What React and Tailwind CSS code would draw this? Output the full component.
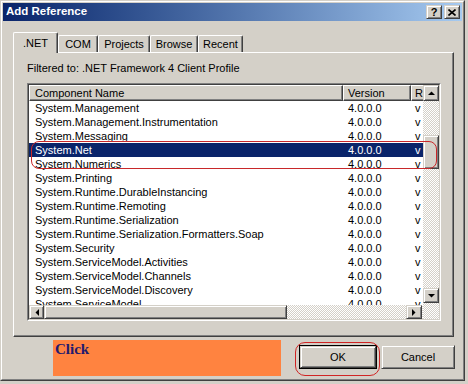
import React from "react";

const FONT = { fontFamily: '"Liberation Sans", Arial, sans-serif' };

const raised =
  "border border-t-[#d4d0c8] border-l-[#d4d0c8] border-r-[#404040] border-b-[#404040] shadow-[inset_1px_1px_0_#ffffff,inset_-1px_-1px_0_#808080] bg-[#d4d0c8]";

const dotted =
  "bg-[image:repeating-conic-gradient(#d4d0c8_0%_25%,#ffffff_0%_50%)] bg-[length:2px_2px]";

function Arrow({ dir }) {
  const pts = {
    up: "0,4 7,4 3.5,0.5",
    down: "0,0 7,0 3.5,3.5",
    left: "4,0 4,7 0.5,3.5",
    right: "0,0 0,7 3.5,3.5",
  }[dir];
  const horiz = dir === "left" || dir === "right";
  return (
    <svg width={horiz ? 4 : 7} height={horiz ? 7 : 4} viewBox={horiz ? "0 0 4 7" : "0 0 7 4"}>
      <polygon points={pts} fill="#000" />
    </svg>
  );
}

function ScrollBtn({ dir, className }) {
  return (
    <div className={`${raised} flex items-center justify-center shrink-0 ${className}`}>
      <Arrow dir={dir} />
    </div>
  );
}

const rows = [
  "System.Management",
  "System.Management.Instrumentation",
  "System.Messaging",
  "System.Net",
  "System.Numerics",
  "System.Printing",
  "System.Runtime.DurableInstancing",
  "System.Runtime.Remoting",
  "System.Runtime.Serialization",
  "System.Runtime.Serialization.Formatters.Soap",
  "System.Security",
  "System.ServiceModel.Activities",
  "System.ServiceModel.Channels",
  "System.ServiceModel.Discovery",
  "System.ServiceModel",
];

const headerCell =
  "h-[16px] shrink-0 flex items-center border border-t-white border-l-white border-r-[#404040] border-b-[#404040] shadow-[inset_-1px_-1px_0_#808080] overflow-hidden whitespace-nowrap";

export default function App() {
  return (
    <div className="relative w-[468px] h-[384px] bg-[#d4d0c8] overflow-hidden text-[11px] text-black" style={FONT}>
      {/* window frame */}
      <div className="w-[465px] h-[381px] border border-t-[#d4d0c8] border-l-[#d4d0c8] border-r-[#404040] border-b-[#404040]">
        <div className="w-full h-full border border-t-white border-l-white border-r-[#808080] border-b-[#808080] p-px flex flex-col">
          {/* title bar */}
          <div className="h-[18px] shrink-0 bg-gradient-to-r from-[#0a246a] to-[#a6caf0] flex items-center pl-[3px] pr-[2px]">
            <span className="text-white font-bold text-[11.5px] leading-none">Add Reference</span>
            <div className="ml-auto flex gap-[2px]">
              <div className={`${raised} w-[16px] h-[14px] flex items-center justify-center text-[11px] font-bold leading-none`}>
                ?
              </div>
              <div className={`${raised} w-[16px] h-[14px] flex items-center justify-center`}>
                <svg width="8" height="7" viewBox="0 0 8 7">
                  <path d="M0.5 0.5 L7.5 6.5 M7.5 0.5 L0.5 6.5" stroke="#000" strokeWidth="1.6" />
                </svg>
              </div>
            </div>
          </div>

          {/* tabs */}
          <div className="relative z-10 -mb-px mt-[11px] ml-[10px] h-[21px] flex items-end">
            <div className="h-[21px] w-[45px] flex items-center justify-center bg-[#d4d0c8] border-t border-l border-t-white border-l-white border-r border-r-[#404040] shadow-[inset_-1px_0_0_#808080] rounded-t-[2px]">
              .NET
            </div>
            {[
              ["COM", 40],
              ["Projects", 52],
              ["Browse", 48],
              ["Recent", 45],
            ].map(([t, w]) => (
              <div
                key={t}
                style={{ width: w }}
                className="h-[17px] mb-px flex items-center justify-center border-t border-l border-t-white border-l-white border-r border-r-[#404040] shadow-[inset_-1px_0_0_#808080] rounded-t-[2px]"
              >
                {t}
              </div>
            ))}
          </div>

          {/* panel */}
          <div className="ml-[10px] w-[441px] h-[285px] shrink-0 border border-t-white border-l-white border-r-[#404040] border-b-[#404040] shadow-[inset_-1px_-1px_0_#808080] pl-[13px] pt-[8px]">
            <div className="leading-[14px] whitespace-nowrap">Filtered to: .NET Framework 4 Client Profile</div>
            {/* list box */}
            <div className="mt-[8px] w-[414px] h-[238px] border border-t-[#808080] border-l-[#808080] border-r-white border-b-white">
              <div className="w-full h-full border border-t-[#404040] border-l-[#404040] border-r-[#d4d0c8] border-b-[#d4d0c8] bg-white flex">
                <div className="w-[394px] flex flex-col">
                  <div className="flex bg-[#d4d0c8] overflow-hidden">
                    <div className={`${headerCell} w-[314px] pl-[5px]`}>Component Name</div>
                    <div className={`${headerCell} w-[68px] pl-[4px]`}>Version</div>
                    <div className={`${headerCell} w-[30px] pl-[3px]`}>Runtime</div>
                  </div>
                  <div className="h-[204px] overflow-hidden">
                    {rows.map((r) => {
                      const sel = r === "System.Net";
                      return (
                        <div
                          key={r}
                          className={`h-[14px] flex items-center whitespace-nowrap overflow-hidden ${sel ? "bg-[#0a246a] text-white" : ""}`}
                        >
                          <div className="w-[314px] shrink-0 pl-[6px]">{r}</div>
                          <div className="w-[68px] shrink-0 pl-[5px]">4.0.0.0</div>
                          <div className="w-[12px] shrink-0 pl-[4px] overflow-hidden">v</div>
                        </div>
                      );
                    })}
                  </div>
                  <div className="h-[14px] flex">
                    <ScrollBtn dir="left" className="w-[15px] h-[14px]" />
                    <div className={`${raised} w-[243px] h-[14px]`} />
                    <div className={`flex-1 ${dotted}`} />
                    <ScrollBtn dir="right" className="w-[16px] h-[14px]" />
                    <div className={`w-[1px] ${dotted}`} />
                  </div>
                </div>
                <div className="w-[16px] flex flex-col">
                  <ScrollBtn dir="up" className="w-[16px] h-[16px]" />
                  <div className={`h-[34px] ${dotted}`} />
                  <div className={`${raised} h-[34px]`} />
                  <div className={`flex-1 ${dotted}`} />
                  <ScrollBtn dir="down" className="w-[16px] h-[15px]" />
                  <div className={`h-[16px] ${dotted}`} />
                </div>
              </div>
            </div>
          </div>

          {/* bottom row */}
          <div className="mt-[3px] flex items-start">
            <div className="ml-[50px] w-[228px] h-[36px] bg-[#ff8340] pl-[2px] pt-px">
              <span
                className="text-[15px] font-bold leading-[17px] text-[#221a6e]"
                style={{ fontFamily: '"Liberation Serif", "Times New Roman", serif' }}
              >
                Click
              </span>
            </div>
            <div className="ml-[18px] mt-[5px] w-[78px] h-[24px] border border-black">
              <div className={`${raised} w-full h-full flex items-center justify-center`}>OK</div>
            </div>
            <div className={`${raised} ml-[4px] mt-[5px] w-[74px] h-[24px] flex items-center justify-center`}>
              Cancel
            </div>
          </div>
        </div>
      </div>

      {/* annotation rings */}
      <div className="absolute left-[31px] top-[141px] w-[406px] h-[28px] rounded-[8px] border border-[#c8282a] pointer-events-none" />
      <div className="absolute left-[295px] top-[342px] w-[85px] h-[34px] rounded-[10px] border border-[#d02424] pointer-events-none" />
    </div>
  );
}
